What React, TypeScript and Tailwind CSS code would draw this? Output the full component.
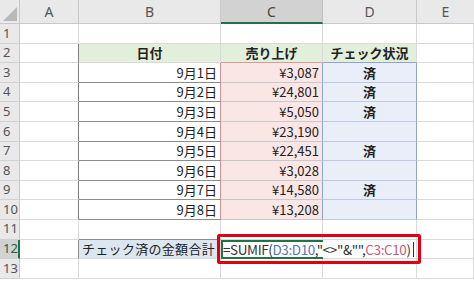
import type { ReactNode } from 'react'

const jp = "font-['Noto_Sans_CJK_JP','Noto_Sans',sans-serif]"

const dates = ['9月1日', '9月2日', '9月3日', '9月4日', '9月5日', '9月6日', '9月7日', '9月8日']
const sales = ['¥3,087', '¥24,801', '¥5,050', '¥23,190', '¥22,451', '¥3,028', '¥14,580', '¥13,208']
const checks = ['済', '済', '済', '', '済', '', '済', '']

const widths = {
  head: 'w-[20px]',
  A: 'w-[59px]',
  B: 'w-[142px]',
  C: 'w-[102px]',
  D: 'w-[94px]',
  E: 'w-[57px]',
}

function Cell({ className = '', children }: { className?: string; children?: ReactNode }) {
  return (
    <div className={`shrink-0 h-full flex items-center whitespace-nowrap border-r border-b border-[#dadada] text-[13px] text-[#222] ${className}`}>
      {children}
    </div>
  )
}

function RowHead({ n, active = false }: { n: number; active?: boolean }) {
  return (
    <div
      className={`shrink-0 h-full ${widths.head} flex items-center pl-[3px] text-[13px] font-['Noto_Sans',sans-serif] border-b border-[#d0d0d0] ${
        active
          ? 'bg-[#d2d2d2] text-[#2c5f3f] border-r-2 border-r-[#217346]'
          : 'bg-[#e9e9e9] text-[#555] border-r border-r-[#c8c8c8]'
      }`}
    >
      {n}
    </div>
  )
}

function Row({ children }: { children: ReactNode }) {
  return <div className="flex h-[19.6px]">{children}</div>
}

export default function App() {
  return (
    <div className={`w-[474px] h-[282px] overflow-hidden bg-white relative ${jp}`}>
      {/* column headers */}
      <div className="flex h-[24px] font-['Noto_Sans',sans-serif] text-[14px] text-[#555]">
        <div className={`${widths.head} shrink-0 bg-[#e9e9e9] border-r border-b border-[#c8c8c8] relative`}>
          <svg className="absolute right-[2px] bottom-[2px]" width="14" height="14" viewBox="0 0 14 14">
            <polygon points="14,0 14,14 0,14" fill="#b8b8b8" />
          </svg>
        </div>
        <div className={`${widths.A} shrink-0 bg-[#e9e9e9] border-r border-b border-[#c8c8c8] flex items-center justify-center`}>A</div>
        <div className={`${widths.B} shrink-0 bg-[#e9e9e9] border-r border-b border-[#c8c8c8] flex items-center justify-center`}>B</div>
        <div className={`${widths.C} shrink-0 bg-[#d2d2d2] border-r border-[#c0c0c0] border-b-2 border-b-[#217346] flex items-center justify-center text-[#444]`}>C</div>
        <div className={`${widths.D} shrink-0 bg-[#e9e9e9] border-r border-b border-[#c8c8c8] flex items-center justify-center`}>D</div>
        <div className={`${widths.E} shrink-0 bg-[#e9e9e9] border-b border-[#c8c8c8] flex items-center justify-center`}>E</div>
      </div>

      {/* row 1 */}
      <Row>
        <RowHead n={1} />
        <Cell className={widths.A} />
        <Cell className={widths.B} />
        <Cell className={widths.C} />
        <Cell className={widths.D} />
        <Cell className={widths.E} />
      </Row>

      {/* row 2: table headings */}
      <Row>
        <RowHead n={2} />
        <Cell className={`${widths.A} border-r-[#7f7f7f]`} />
        <Cell className={`${widths.B} bg-[#e2efda] border-[#8c8c8c] justify-center font-bold`}>日付</Cell>
        <Cell className={`${widths.C} bg-[#e2efda] border-[#8c8c8c] border-b-[#d99a9a] justify-center font-bold`}>売り上げ</Cell>
        <Cell className={`${widths.D} bg-[#e2efda] border-[#8c8c8c] border-b-[#8ea6cf] justify-center font-bold`}>チェック状況</Cell>
        <Cell className={widths.E} />
      </Row>

      {dates.map((d, i) => (
        <Row key={d}>
          <RowHead n={i + 3} />
          <Cell className={`${widths.A} border-r-[#7f7f7f]`} />
          <Cell className={`${widths.B} border-r-[#d58f8f] border-b-[#8c8c8c] justify-end pr-[3px]`}>{d}</Cell>
          <Cell className={`${widths.C} bg-[#fbe6e6] border-r-[#8ea6cf] border-b-[#c9c9c9] justify-end pr-[3px]`}>{sales[i]}</Cell>
          <Cell className={`${widths.D} bg-[#e9eef8] border-r-[#8ea6cf] border-b-[#bccbe4] justify-center font-bold`}>{checks[i]}</Cell>
          <Cell className={widths.E} />
        </Row>
      ))}

      {/* row 11 */}
      <Row>
        <RowHead n={11} />
        <Cell className={widths.A} />
        <Cell className={`${widths.B} border-b-[#8c8c8c]`} />
        <Cell className={widths.C} />
        <Cell className={widths.D} />
        <Cell className={widths.E} />
      </Row>

      {/* row 12: total with formula being edited */}
      <Row>
        <RowHead n={12} active />
        <Cell className={`${widths.A} border-r-[#8c8c8c]`} />
        <Cell className={`${widths.B} bg-[#dce6f1] border-[#8c8c8c] pl-[3px] text-[13px] tracking-[0.3px]`}>チェック済の金額合計</Cell>
        <div className={`${widths.C} shrink-0 h-full relative border-2 border-[#217346] bg-white`}>
          <div className="absolute z-10 left-0 top-0 h-full flex items-center whitespace-nowrap bg-white pr-[2px] text-[13.5px] tracking-[-0.4px] text-[#333]">
            <span>=SUMIF(</span>
            <span className="text-[#5577b0]">D3:D10</span>
            <span>,"&lt;&gt;"&amp;"",</span>
            <span className="text-[#c0607c]">C3:C10</span>
            <span>)</span>
            <span className="ml-[2px] w-px h-[15px] bg-[#333]" />
          </div>
        </div>
        <Cell className={`${widths.D} border-r-[#dadada]`} />
        <Cell className={widths.E} />
      </Row>

      {/* row 13 */}
      <Row>
        <RowHead n={13} />
        <Cell className={widths.A} />
        <Cell className={widths.B} />
        <Cell className={widths.C} />
        <Cell className={widths.D} />
        <Cell className={widths.E} />
      </Row>

      {/* red callout around the formula */}
      <div className="absolute z-20 left-[217px] top-[234px] w-[204px] h-[30px] border-[3px] border-[#e00012] rounded-[2px]" />
    </div>
  )
}
